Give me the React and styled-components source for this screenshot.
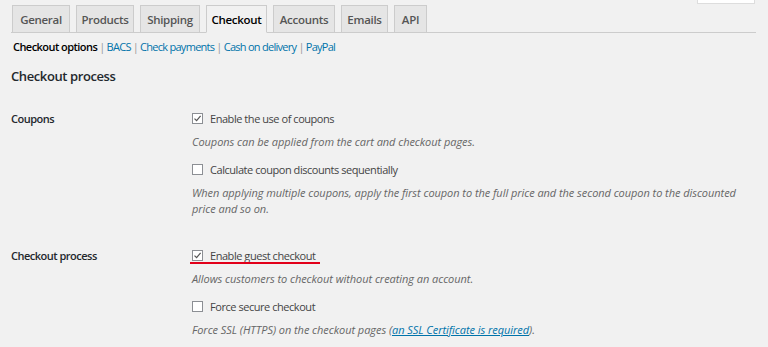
import React from "react";
import styled, { createGlobalStyle, css } from "styled-components";

const Global = createGlobalStyle`
  html, body { margin: 0; padding: 0; background: #f1f1f1; }
  body { font-family: "Open Sans", "Noto Sans", sans-serif; font-size: 11px; color: #444; letter-spacing: -0.45px; }
  * { box-sizing: border-box; }
`;

const Page = styled.div`
  width: 768px;
  height: 347px;
  overflow: hidden;
  padding: 0 12px 0 11px;
`;

const TopBar = styled.div`
  display: flex;
  justify-content: flex-end;
  height: 5px;
`;

const ScreenMeta = styled.div`
  width: 58px;
  height: 4px;
  margin-right: 1px;
  background: #fff;
  border: 1px solid #ddd;
  border-top: none;
`;

const Tabs = styled.nav`
  display: flex;
  gap: 6px;
  padding-left: 1px;
  border-bottom: 1px solid #ccc;
  height: 28px;
`;

const Tab = styled.a`
  display: flex;
  align-items: center;
  justify-content: center;
  height: 28px;
  width: ${(p) => p.$w}px;
  border: 1px solid #ccc;
  background: ${(p) => (p.$active ? "#f1f1f1" : "#e5e5e5")};
  border-bottom-color: ${(p) => (p.$active ? "#f1f1f1" : "#ccc")};
  color: ${(p) => (p.$active ? "#000" : "#555")};
  font-size: 11.5px;
  font-weight: 600;
  letter-spacing: -0.3px;
  text-decoration: none;
`;

const SubNav = styled.ul`
  display: flex;
  list-style: none;
  margin: 5px 0 0 2px;
  padding: 0;
  line-height: 17px;
  font-size: 11px;
  letter-spacing: -0.72px;
`;

const SubItem = styled.li`
  display: flex;
`;

const SubLink = styled.a`
  color: ${(p) => (p.$current ? "#000" : "#0073aa")};
  font-weight: ${(p) => (p.$current ? 600 : 400)};
  letter-spacing: ${(p) => (p.$current ? "-0.55px" : "inherit")};
  text-decoration: none;
`;

const Sep = styled.span`
  color: #999;
  margin: 0 2px 0 2px;
`;

const Heading = styled.h2`
  margin: 12px 0 10px 0;
  font-size: 13px;
  line-height: 18px;
  font-weight: 600;
  letter-spacing: -0.4px;
  color: #23282d;
`;

const Row = styled.div`
  display: grid;
  grid-template-columns: 181px 1fr;
  padding: 15px 0;
`;

const Label = styled.div`
  font-weight: 600;
  color: #23282d;
  line-height: 17px;
  letter-spacing: -0.5px;
`;

const Field = styled.div`
  display: flex;
  flex-direction: column;
`;

const Option = styled.label`
  position: relative;
  display: flex;
  align-items: center;
  gap: 7px;
  height: 17px;
  width: max-content;
  margin-top: ${(p) => (p.$first ? 0 : 11)}px;
  ${(p) =>
    p.$marked &&
    css`
      &::after {
        content: "";
        position: absolute;
        left: -2px;
        right: -4px;
        bottom: 0.5px;
        height: 2px;
        background: #e2001a;
      }
    `}
`;

const Box = styled.span`
  width: 11px;
  height: 11px;
  border: 1px solid #8c8f94;
  background: #fff;
  display: flex;
  align-items: center;
  justify-content: center;
  flex: none;
`;

const Desc = styled.p`
  margin: 7px 0 0 0;
  font-style: italic;
  color: #666;
  line-height: 16px;
  letter-spacing: -0.05px;
  max-width: 552px;
`;

const Link = styled.a`
  color: #0073aa;
  text-decoration: underline;
`;

const Check = ({ checked }) => (
  <Box>
    {checked && (
      <svg width="9" height="9" viewBox="0 0 9 9">
        <path d="M1.5 4.6 L3.6 6.7 L7.6 1.8" fill="none" stroke="#555" strokeWidth="1.2" />
      </svg>
    )}
  </Box>
);

const tabs = [
  ["General", 58],
  ["Products", 58],
  ["Shipping", 60],
  ["Checkout", 61],
  ["Accounts", 62],
  ["Emails", 47],
  ["API", 33],
];

const subs = ["Checkout options", "BACS", "Check payments", "Cash on delivery", "PayPal"];

export default function App() {
  return (
    <>
      <Global />
      <Page>
        <TopBar>
          <ScreenMeta />
        </TopBar>
        <Tabs>
          {tabs.map(([t, w]) => (
            <Tab key={t} $w={w} $active={t === "Checkout"}>
              {t}
            </Tab>
          ))}
        </Tabs>
        <SubNav>
          {subs.map((s, i) => (
            <SubItem key={s}>
              {i > 0 && <Sep>|</Sep>}
              <SubLink $current={i === 0}>{s}</SubLink>
            </SubItem>
          ))}
        </SubNav>
        <Heading>Checkout process</Heading>
        <Row>
          <Label>Coupons</Label>
          <Field>
            <Option $first>
              <Check checked />
              Enable the use of coupons
            </Option>
            <Desc>Coupons can be applied from the cart and checkout pages.</Desc>
            <Option>
              <Check />
              Calculate coupon discounts sequentially
            </Option>
            <Desc>
              When applying multiple coupons, apply the first coupon to the full price and the second coupon to the discounted
              price and so on.
            </Desc>
          </Field>
        </Row>
        <Row>
          <Label>Checkout process</Label>
          <Field>
            <Option $first $marked>
              <Check checked />
              Enable guest checkout
            </Option>
            <Desc>Allows customers to checkout without creating an account.</Desc>
            <Option>
              <Check />
              Force secure checkout
            </Option>
            <Desc>
              Force SSL (HTTPS) on the checkout pages (<Link>an SSL Certificate is required</Link>).
            </Desc>
          </Field>
        </Row>
      </Page>
    </>
  );
}
